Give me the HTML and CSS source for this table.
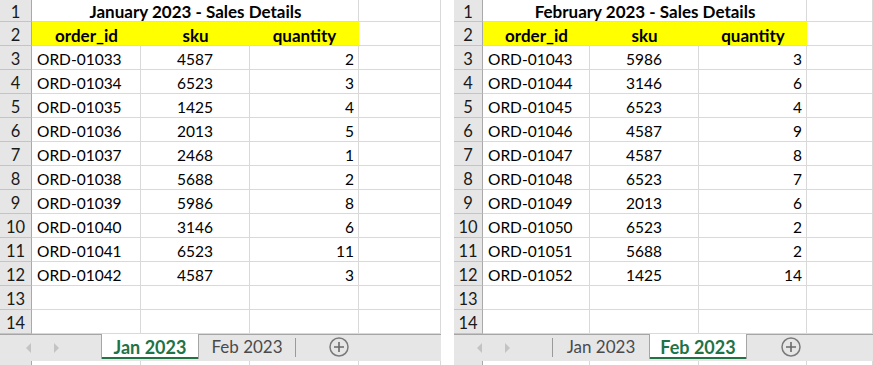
FILE: index.html
```html
<!DOCTYPE html>
<html>
<head>
<meta charset="utf-8">
<link rel="stylesheet" href="styles.css">
</head>
<body>
<div class="screen">
  <section class="panel panel-left">
    <div class="sheet sheet-left">
      <div class="rh">1</div><div class="c title">January 2023 - Sales Details</div><div class="c"></div>
      <div class="rh">2</div><div class="c hd">order_id</div><div class="c hd">sku</div><div class="c hd">quantity</div><div class="c"></div>
      <div class="rh">3</div><div class="c l">ORD-01033</div><div class="c m">4587</div><div class="c r">2</div><div class="c"></div>
      <div class="rh">4</div><div class="c l">ORD-01034</div><div class="c m">6523</div><div class="c r">3</div><div class="c"></div>
      <div class="rh">5</div><div class="c l">ORD-01035</div><div class="c m">1425</div><div class="c r">4</div><div class="c"></div>
      <div class="rh">6</div><div class="c l">ORD-01036</div><div class="c m">2013</div><div class="c r">5</div><div class="c"></div>
      <div class="rh">7</div><div class="c l">ORD-01037</div><div class="c m">2468</div><div class="c r">1</div><div class="c"></div>
      <div class="rh">8</div><div class="c l">ORD-01038</div><div class="c m">5688</div><div class="c r">2</div><div class="c"></div>
      <div class="rh">9</div><div class="c l">ORD-01039</div><div class="c m">5986</div><div class="c r">8</div><div class="c"></div>
      <div class="rh">10</div><div class="c l">ORD-01040</div><div class="c m">3146</div><div class="c r">6</div><div class="c"></div>
      <div class="rh">11</div><div class="c l">ORD-01041</div><div class="c m">6523</div><div class="c r">11</div><div class="c"></div>
      <div class="rh">12</div><div class="c l">ORD-01042</div><div class="c m">4587</div><div class="c r">3</div><div class="c"></div>
      <div class="rh">13</div><div class="c"></div><div class="c"></div><div class="c"></div><div class="c"></div>
      <div class="rh">14</div><div class="c"></div><div class="c"></div><div class="c"></div><div class="c"></div>
    </div>
    <div class="tabbar">
      <div class="nav nav-left">
        <span class="arrow arrow-l"></span><span class="arrow arrow-r"></span>
      </div>
      <div class="tab active">Jan 2023</div>
      <div class="tab">Feb 2023</div>
      <div class="sep"></div>
      <div class="add-wrap">
        <svg class="add" width="20" height="20" viewBox="0 0 20 20"><circle cx="10" cy="10" r="9" fill="none" stroke="#7a7a7a" stroke-width="1.5"/><path d="M10 5v10M5 10h10" stroke="#6a6a6a" stroke-width="1.6"/></svg>
      </div>
    </div>
    <div class="sheet sheet-left tail">
      <div class="rh"></div><div class="c"></div><div class="c"></div><div class="c"></div><div class="c"></div>
    </div>
  </section>

  <section class="panel panel-right">
    <div class="sheet sheet-right">
      <div class="rh">1</div><div class="c title">February 2023 - Sales Details</div><div class="c"></div>
      <div class="rh">2</div><div class="c hd">order_id</div><div class="c hd">sku</div><div class="c hd">quantity</div><div class="c"></div>
      <div class="rh">3</div><div class="c l">ORD-01043</div><div class="c m">5986</div><div class="c r">3</div><div class="c"></div>
      <div class="rh">4</div><div class="c l">ORD-01044</div><div class="c m">3146</div><div class="c r">6</div><div class="c"></div>
      <div class="rh">5</div><div class="c l">ORD-01045</div><div class="c m">6523</div><div class="c r">4</div><div class="c"></div>
      <div class="rh">6</div><div class="c l">ORD-01046</div><div class="c m">4587</div><div class="c r">9</div><div class="c"></div>
      <div class="rh">7</div><div class="c l">ORD-01047</div><div class="c m">4587</div><div class="c r">8</div><div class="c"></div>
      <div class="rh">8</div><div class="c l">ORD-01048</div><div class="c m">6523</div><div class="c r">7</div><div class="c"></div>
      <div class="rh">9</div><div class="c l">ORD-01049</div><div class="c m">2013</div><div class="c r">6</div><div class="c"></div>
      <div class="rh">10</div><div class="c l">ORD-01050</div><div class="c m">6523</div><div class="c r">2</div><div class="c"></div>
      <div class="rh">11</div><div class="c l">ORD-01051</div><div class="c m">5688</div><div class="c r">2</div><div class="c"></div>
      <div class="rh">12</div><div class="c l">ORD-01052</div><div class="c m">1425</div><div class="c r">14</div><div class="c"></div>
      <div class="rh">13</div><div class="c"></div><div class="c"></div><div class="c"></div><div class="c"></div>
      <div class="rh">14</div><div class="c"></div><div class="c"></div><div class="c"></div><div class="c"></div>
    </div>
    <div class="tabbar">
      <div class="nav nav-right">
        <span class="arrow arrow-l"></span><span class="arrow arrow-r"></span>
      </div>
      <div class="sep"></div>
      <div class="tab">Jan 2023</div>
      <div class="tab active">Feb 2023</div>
      <div class="add-wrap add-wrap-right">
        <svg class="add" width="20" height="20" viewBox="0 0 20 20"><circle cx="10" cy="10" r="9" fill="none" stroke="#7a7a7a" stroke-width="1.5"/><path d="M10 5v10M5 10h10" stroke="#6a6a6a" stroke-width="1.6"/></svg>
      </div>
    </div>
    <div class="sheet sheet-right tail">
      <div class="rh"></div><div class="c"></div><div class="c"></div><div class="c"></div><div class="c"></div>
    </div>
  </section>
</div>
</body>
</html>
```

FILE: styles.css
```css
* { box-sizing: border-box; }
html, body { margin: 0; padding: 0; background: #ffffff; }
body { font-family: Lato, "Open Sans", sans-serif; color: #000; }

.screen {
  display: flex;
  gap: 13px;
  width: 873px;
  height: 365px;
  overflow: hidden;
}

.panel {
  display: flex;
  flex-direction: column;
  height: 365px;
  overflow: hidden;
}
.panel-left { width: 441px; }
.panel-right { width: 419px; }

.sheet {
  display: grid;
  grid-template-rows: 22px repeat(13, 24px);
  font-size: 15.5px;
}
.sheet-left { grid-template-columns: 32px 109px 109px 109px 1fr; }
.sheet-right { grid-template-columns: 29px 107px 109px 108px 1fr; }
.sheet.tail { grid-template-rows: 24px; }

.rh {
  background: #e6e6e6;
  border-right: 1px solid #a9a9a9;
  border-bottom: 1px solid #c4c4c4;
  display: flex;
  align-items: center;
  justify-content: center;
  padding-top: 2px;
  color: #1a1a1a;
  font-size: 16.5px;
}

.c {
  border-right: 1px solid #d9d9d9;
  border-bottom: 1px solid #d9d9d9;
  display: flex;
  align-items: center;
  padding: 3px 4px 0 5px;
  white-space: nowrap;
}
.title {
  grid-column: span 3;
  justify-content: center;
  font-weight: 700;
  font-size: 17px;
  padding-top: 1px;
}
.hd {
  background: #ffff00;
  justify-content: center;
  font-weight: 700;
  font-size: 17px;
  border-right-color: #ffff00;
}
.l { justify-content: flex-start; }
.m { justify-content: center; padding-left: 0; padding-right: 0; }
.r { justify-content: flex-end; }

.tabbar {
  flex: 0 0 27px;
  display: flex;
  align-items: stretch;
  background: #e6e6e6;
  border-top: 1px solid #a6a6a6;
}
.nav {
  display: flex;
  align-items: center;
}
.nav-left { width: 101px; padding-left: 26px; gap: 23px; }
.nav-right { width: 98px; padding-left: 23px; gap: 23px; }
.arrow {
  width: 0; height: 0;
  border-top: 5px solid transparent;
  border-bottom: 5px solid transparent;
}
.arrow-l { border-right: 5px solid #c3c3c3; }
.arrow-r { border-left: 5px solid #c3c3c3; }

.tab {
  width: 96px;
  display: flex;
  align-items: center;
  justify-content: center;
  padding-bottom: 3px;
  font-size: 17px;
  color: #4a4a4a;
}
.tab.active {
  width: 98px;
  margin-top: -1px;
  background: #ffffff;
  border-left: 1px solid #a6a6a6;
  border-right: 1px solid #a6a6a6;
  color: #217346;
  font-weight: 700;
  font-size: 18px;
  box-shadow: inset 0 -2px 0 #217346;
  margin-bottom: 2px;
  padding-bottom: 0;
}
.sep {
  width: 1px;
  background: #9a9a9a;
  margin: 3px 0 4px;
}
.add-wrap {
  display: flex;
  align-items: center;
  padding-left: 33px;
  padding-bottom: 2px;
}
.add-wrap-right { padding-left: 34px; }
.add { display: block; }
```
